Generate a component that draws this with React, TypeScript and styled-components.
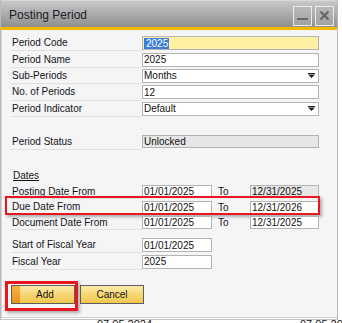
import styled, { createGlobalStyle } from 'styled-components';

const GlobalStyle = createGlobalStyle`
  html, body { margin: 0; padding: 0; background: #ffffff; }
  body { font-family: "Liberation Sans", Arial, sans-serif; color: #141420; }
`;

type Variant = 'yellow' | 'white' | 'grey';

const fieldBg: Record<Variant, string> = {
  yellow: '#fff0a2',
  white: '#ffffff',
  grey: '#e6e6e6',
};

const App = () => {
  return (
    <>
      <GlobalStyle />
      <Window>
        <TitleBar>
          <Title>Posting Period</Title>
          <TitleButtons>
            <TitleButton>
              <svg width="11" height="11" viewBox="0 0 11 11">
                <rect x="0" y="8" width="11" height="2" fill="#666" />
              </svg>
            </TitleButton>
            <TitleButton>
              <svg width="11" height="11" viewBox="0 0 11 11">
                <path d="M1.5 1.5 L9.5 9.5 M9.5 1.5 L1.5 9.5" stroke="#666" strokeWidth="2.2" />
              </svg>
            </TitleButton>
          </TitleButtons>
        </TitleBar>

        <Panel>
          <Row $h={16.4}>
            <Label>Period Code</Label>
            <Field $variant="yellow" $w={177}>
              <Selected>2025</Selected>
            </Field>
          </Row>
          <Row $h={16.4}>
            <Label>Period Name</Label>
            <Field $variant="white" $w={177}>2025</Field>
          </Row>
          <Row $h={16.4}>
            <Label>Sub-Periods</Label>
            <Field $variant="white" $w={177} $select>
              Months
              <Arrow />
            </Field>
          </Row>
          <Row $h={16.4}>
            <Label>No. of Periods</Label>
            <Field $variant="white" $w={177}>12</Field>
          </Row>
          <Row $h={16.4}>
            <Label>Period Indicator</Label>
            <Field $variant="white" $w={177} $select>
              Default
              <Arrow />
            </Field>
          </Row>

          <Row $h={16} $top={17}>
            <Label>Period Status</Label>
            <Field $variant="grey" $w={177} $fh={13}>Unlocked</Field>
          </Row>

          <Row $h={16} $top={18}>
            <SectionTitle>Dates</SectionTitle>
          </Row>

          <DateRow label="Posting Date From" from="01/01/2025" to="12/31/2025" toVariant="grey" />
          <DateRow label="Due Date From" from="01/01/2025" to="12/31/2026" toVariant="white" marked />
          <DateRow label="Document Date From" from="01/01/2025" to="12/31/2025" toVariant="white" />

          <Row $h={16.5} $top={6.5}>
            <Label>Start of Fiscal Year</Label>
            <Field $variant="white" $w={70}>01/01/2025</Field>
          </Row>
          <Row $h={16.5}>
            <Label>Fiscal Year</Label>
            <Field $variant="white" $w={70}>2025</Field>
          </Row>

          <Buttons>
            <ActionButton $primary $marked>Add</ActionButton>
            <ActionButton>Cancel</ActionButton>
          </Buttons>
        </Panel>
      </Window>
      <Cutoff>
        <CutText $x={97}>07.05.2024</CutText>
        <CutText $x={300}>07.05.2024</CutText>
      </Cutoff>
    </>
  );
};

const DateRow = ({
  label,
  from,
  to,
  toVariant,
  marked,
}: {
  label: string;
  from: string;
  to: string;
  toVariant: Variant;
  marked?: boolean;
}) => (
  <DateGrid $marked={marked}>
    <Label>{label}</Label>
    <Field $variant="white" $w={70} $fh={13}>{from}</Field>
    <ToLabel>To</ToLabel>
    <Field $variant={toVariant} $w={69} $fh={13}>{to}</Field>
  </DateGrid>
);

const Arrow = () => (
  <svg width="7" height="5" viewBox="0 0 7 5">
    <rect x="0" y="0" width="7" height="1" fill="#222" />
    <polygon points="0,1.5 7,1.5 3.5,5" fill="#222" />
  </svg>
);

export default App;

const Window = styled.div`
  width: 336px;
  border-left: 1px solid #b9b9b9;
  border-right: 1px solid #b9b9b9;
  border-bottom: 1px solid #c4c4c4;
  padding-bottom: 1px;
  background: #ffffff;
`;

const TitleBar = styled.div`
  height: 26px;
  border-top: 1px solid #d8d8d8;
  border-bottom: 3px solid #f6b800;
  background: linear-gradient(#c8c8c8, #8f8f8f);
  display: flex;
  align-items: center;
  justify-content: space-between;
  padding: 0 3px 0 8px;
`;

const Title = styled.div`
  font-size: 12px;
  color: #1a1a28;
  padding-top: 1px;
`;

const TitleButtons = styled.div`
  display: flex;
  gap: 3px;
  padding-top: 3px;
`;

const TitleButton = styled.div`
  width: 19px;
  height: 20px;
  box-sizing: border-box;
  border: 1px solid #ececec;
  background: linear-gradient(#b9b9b9, #a2a2a2);
  display: flex;
  align-items: center;
  justify-content: center;
`;

const Panel = styled.div`
  height: 288px;
  box-sizing: border-box;
  background: #f5f5f5;
  border-left: 1px solid #d6d6d6;
  border-bottom: 1px solid #cfcfcf;
  padding: 5px 0 0 8px;
  display: flex;
  flex-direction: column;
`;

const Row = styled.div<{ $h: number; $top?: number }>`
  display: grid;
  grid-template-columns: 132px auto;
  align-items: center;
  height: ${(p) => p.$h}px;
  margin-top: ${(p) => p.$top ?? 0}px;
`;

const DateGrid = styled.div<{ $marked?: boolean }>`
  position: relative;
  display: grid;
  grid-template-columns: 132px 70px 38px 69px;
  align-items: center;
  width: max-content;
  height: 15.5px;

  ${(p) =>
    p.$marked &&
    `
    &::after {
      content: '';
      position: absolute;
      top: -3.5px;
      right: -1px;
      bottom: 0;
      left: -5px;
      border: 2.5px solid #e8171f;
      box-shadow: 2px 2px 3px rgba(0, 0, 0, 0.3);
      pointer-events: none;
    }
  `}
`;

const Label = styled.div`
  align-self: stretch;
  display: flex;
  align-items: center;
  padding-left: 2px;
  border-bottom: 1px solid #e0e0e0;
  font-size: 10px;
  white-space: nowrap;
`;

const SectionTitle = styled.div`
  padding-left: 3px;
  font-size: 10px;
  text-decoration: underline;
`;

const ToLabel = styled.div`
  padding-left: 6px;
  font-size: 10px;
`;

const Field = styled.div<{ $variant: Variant; $w: number; $fh?: number; $select?: boolean }>`
  width: ${(p) => p.$w}px;
  height: ${(p) => p.$fh ?? 14}px;
  box-sizing: border-box;
  border: 1px solid #b3b3b3;
  background: ${(p) => fieldBg[p.$variant]};
  display: flex;
  align-items: center;
  justify-content: ${(p) => (p.$select ? 'space-between' : 'flex-start')};
  padding: 0 3px 0 1px;
  font-size: 10px;
  color: #111;
  white-space: nowrap;
`;

const Selected = styled.span`
  background: #3c7ddc;
  color: #ffffff;
  padding: 0 1px 0 2px;
  line-height: 11px;
`;

const Buttons = styled.div`
  display: flex;
  gap: 5px;
  margin-top: 15px;
  padding-left: 1px;
`;

const ActionButton = styled.div<{ $primary?: boolean; $marked?: boolean }>`
  position: relative;
  width: 64px;
  height: 19px;
  box-sizing: border-box;
  border: 1px solid #5e5e5e;
  background: linear-gradient(#fcebab, #f6d774 50%, #f1c64d);
  display: flex;
  align-items: center;
  justify-content: center;
  font-size: 10px;
  color: #141420;
  padding-left: ${(p) => (p.$primary ? '4px' : '0')};

  ${(p) =>
    p.$primary &&
    `
    &::before {
      content: '';
      position: absolute;
      top: 0;
      bottom: 0;
      left: 0;
      width: 8px;
      background: linear-gradient(#f5b445, #e8911c);
    }
  `}

  ${(p) =>
    p.$marked &&
    `
    &::after {
      content: '';
      position: absolute;
      top: -5px;
      right: -4px;
      bottom: -8px;
      left: -7px;
      border: 3px solid #e8171f;
      box-shadow: 2px 2px 3px rgba(0, 0, 0, 0.3);
      pointer-events: none;
    }
  `}
`;

const Cutoff = styled.div`
  position: relative;
  height: 3px;
  overflow: hidden;
`;

const CutText = styled.span<{ $x: number }>`
  position: absolute;
  left: ${(p) => p.$x}px;
  top: -1px;
  font-size: 11px;
  line-height: 11px;
  color: #111;
`;
